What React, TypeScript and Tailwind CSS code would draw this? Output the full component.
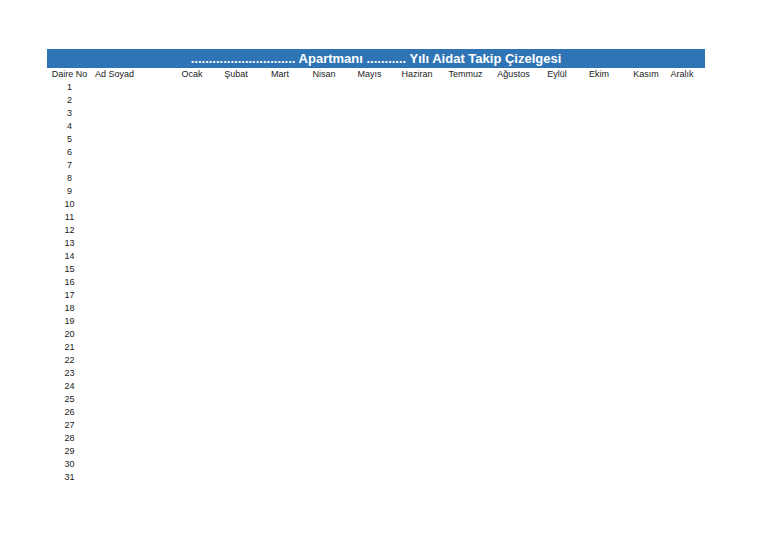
const months: { name: string; w: string }[] = [
  { name: "Ocak", w: "w-[44px]" },
  { name: "Şubat", w: "w-[44px]" },
  { name: "Mart", w: "w-[44px]" },
  { name: "Nisan", w: "w-[44px]" },
  { name: "Mayıs", w: "w-[47px]" },
  { name: "Haziran", w: "w-[48px]" },
  { name: "Temmuz", w: "w-[49px]" },
  { name: "Ağustos", w: "w-[47px]" },
  { name: "Eylül", w: "w-[40px]" },
  { name: "Ekim", w: "w-[44px]" },
  { name: "Kasım", w: "w-[50px]" },
  { name: "Aralık", w: "w-[22px]" },
];

const rows = Array.from({ length: 31 }, (_, i) => i + 1);

const MonthCells = ({ label }: { label: boolean }) => (
  <>
    {months.map((m) => (
      <div key={m.name} className={`${m.w} flex justify-center whitespace-nowrap`}>
        {label ? m.name : ""}
      </div>
    ))}
  </>
);

export default function App() {
  return (
    <div
      className="min-h-[543px] bg-white pt-[49px] pl-[47px] text-[9px] text-[#1a1a1a]"
      style={{ fontFamily: '"Liberation Sans", Arial, sans-serif' }}
    >
      <div className="w-[658px]">
        <div className="flex h-[19px] items-center justify-center bg-[#2f75b5] text-[13px] leading-none font-bold whitespace-nowrap text-white">
          ............................. Apartmanı ........... Yılı Aidat Takip Çizelgesi
        </div>

        <div className="flex h-[13px] items-center leading-none">
          <div className="w-[45px] flex justify-center whitespace-nowrap">Daire No</div>
          <div className="w-[78px] pl-[3px] whitespace-nowrap">Ad Soyad</div>
          <MonthCells label />
        </div>

        {rows.map((n) => (
          <div key={n} className="flex h-[13px] items-center leading-none">
            <div className="w-[45px] flex justify-center">{n}</div>
            <div className="w-[78px]" />
            <MonthCells label={false} />
          </div>
        ))}
      </div>
    </div>
  );
}
